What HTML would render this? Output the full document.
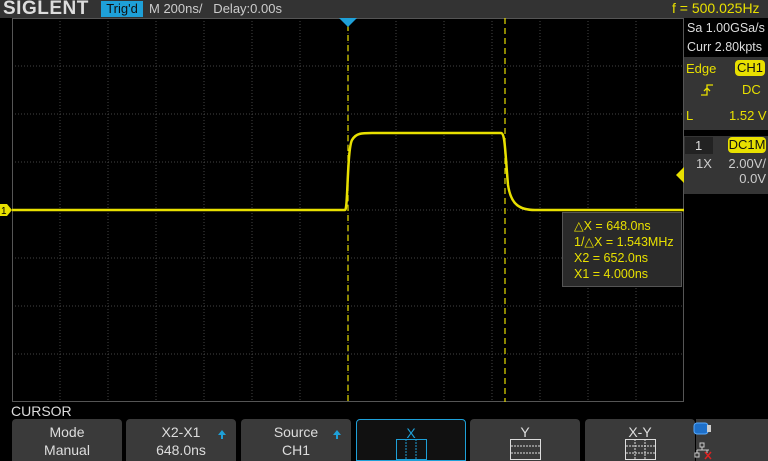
<!DOCTYPE html>
<html><head><style>
body{margin:0;width:768px;height:461px;background:#000;position:relative;overflow:hidden;font-family:"Liberation Sans",sans-serif}
.a{position:absolute}
.btn{position:absolute;top:419px;height:42px;width:110px;background:#3a3a3a;border-radius:4px 4px 0 0;color:#ddd;font-size:14px;text-align:center;line-height:18px;box-sizing:border-box;padding-top:4px}
.y{color:#e8e000}
</style></head><body>
<div class="a" style="left:0;top:0;width:768px;height:18px;background:#333"></div>
<div class="a" style="left:3px;top:-2px;font-size:19px;font-weight:bold;color:#ddd;letter-spacing:0.5px">SIGLENT</div>
<div class="a" style="left:101px;top:1px;width:42px;height:16px;background:#1ea0d8;color:#111;font-size:13px;line-height:16px;text-align:center">Trig'd</div>
<div class="a" style="left:149px;top:1px;font-size:13px;color:#ccc;line-height:16px">M 200ns/&nbsp;&nbsp; Delay:0.00s</div>
<div class="a y" style="left:672px;top:0px;font-size:14px;line-height:17px">f = 500.025Hz</div>
<div class="a" style="left:687px;top:19px;font-size:12.5px;color:#ddd;line-height:19px">Sa 1.00GSa/s<br>Curr 2.80kpts</div>
<div class="a" style="left:684px;top:57px;width:84px;height:73px;background:#353535"></div>
<div class="a y" style="left:686px;top:61px;font-size:13px">Edge</div>
<div class="a" style="left:735px;top:60px;width:30px;height:16px;background:#e8e000;border-radius:4px;color:#111;font-size:13px;text-align:center;line-height:16px">CH1</div>
<svg class="a" style="left:700px;top:83px" width="14" height="14"><path d="M1 12H7V2H13M4 8L7 5L10 8" stroke="#e8e000" fill="none" stroke-width="1.3"/></svg>
<div class="a y" style="left:742px;top:82px;font-size:13px">DC</div>
<div class="a y" style="left:686px;top:108px;font-size:13px">L</div>
<div class="a y" style="left:729px;top:108px;font-size:13px">1.52 V</div>
<div class="a" style="left:684px;top:136px;width:84px;height:58px;background:#353535"></div>
<div class="a" style="left:685px;top:137px;width:28px;height:17px;background:#222;color:#ddd;font-size:13px;line-height:17px;padding-left:10px;box-sizing:border-box">1</div>
<div class="a" style="left:728px;top:137px;width:38px;height:16px;background:#e8e000;border-radius:4px;color:#111;font-size:13px;text-align:center;line-height:16px">DC1M</div>
<div class="a" style="left:696px;top:156px;font-size:13px;color:#ccc">1X</div>
<div class="a" style="left:728px;top:156px;font-size:13px;color:#ccc;text-align:right;width:38px;line-height:15px">2.00V/<br>0.0V</div>
<svg class="a" style="left:0;top:0" width="768" height="420">
<g stroke="#444" stroke-dasharray="1 2" stroke-width="1">
<path d="M60 18V402M108 18V402M156 18V402M204 18V402M252 18V402M300 18V402M348 18V402M396 18V402M444 18V402M492 18V402M540 18V402M588 18V402M636 18V402"/>
<path d="M12 66H684M12 114H684M12 162H684M12 210H684M12 258H684M12 306H684M12 354H684"/>
</g>
<rect x="12.5" y="18.5" width="671" height="383" fill="none" stroke="#555"/>
<path d="M12 210H345C348 210 347 150 352 140C356 133 362 133 372 133H501C505 133 505 150 508 185C511 205 520 210 535 210H684" stroke="#e8e000" stroke-width="2.5" fill="none"/>
<path d="M348 25V402M505 18V402" stroke="#e8e000" stroke-width="1.2" stroke-dasharray="6 4"/>
<path d="M339 18H357L348 27Z" fill="#1ea0d8"/>
<path d="M0 204H7L12 210L7 216H0Z" fill="#e8e000"/>
<text x="1" y="214" font-size="10" fill="#000" font-family="Liberation Sans">1</text>
<path d="M684 167V183L676 175Z" fill="#e8e000"/>
<rect x="562.5" y="212.5" width="119" height="74" fill="#2a2a2a" stroke="#555"/>
<g fill="#e8e000" font-size="12.5" font-family="Liberation Sans">
<text x="574" y="230">△X = 648.0ns</text>
<text x="574" y="246">1/△X = 1.543MHz</text>
<text x="574" y="262">X2 = 652.0ns</text>
<text x="574" y="278">X1 = 4.000ns</text>
</g>
</svg>
<div class="a" style="left:11px;top:403px;font-size:14px;color:#ddd">CURSOR</div>
<div class="btn" style="left:12px">Mode<br>Manual</div>
<div class="btn" style="left:126px">X2-X1<br>648.0ns</div>
<div class="btn" style="left:241px">Source<br>CH1</div>
<div class="btn" style="left:470px">Y</div>
<div class="btn" style="left:585px">X-Y</div>
<div class="btn" style="left:356px;background:#111;border:1px solid #1ea0d8;color:#1ea0d8">X</div>
<svg class="a" style="left:0;top:419px" width="768" height="42">
<path d="M222 11L226 16H223V20H221V16H218Z" fill="#1ea0d8"/>
<path d="M337 11L341 16H338V20H336V16H333Z" fill="#1ea0d8"/>
<rect x="396.5" y="20.5" width="30" height="20" fill="none" stroke="#1ea0d8"/>
<path d="M406 20V41M416 20V41" stroke="#1ea0d8" stroke-dasharray="2 1"/>
<rect x="510.5" y="20.5" width="30" height="20" fill="none" stroke="#ddd"/>
<path d="M511 27H540M511 34H540" stroke="#ddd" stroke-dasharray="2 1"/>
<rect x="625.5" y="20.5" width="30" height="20" fill="none" stroke="#ddd"/>
<path d="M626 27H655M626 34H655M635 20V41M645 20V41" stroke="#ddd" stroke-dasharray="2 1"/>
<rect x="696" y="0" width="72" height="42" fill="#3a3a3a"/>
<rect x="694" y="4" width="14" height="11" rx="3" fill="#1e6fc8" stroke="#5af" />
<rect x="707" y="6" width="4" height="7" fill="#ccc"/>
<path d="M700 24H704V28H700ZM702 28V31M697 31H709M697 31V34M707 31V34M695 34H699V38H695Z" stroke="#ccc" fill="none"/>
<path d="M705 33L711 40M711 33L705 40" stroke="#d22" stroke-width="1.5"/>
</svg>
</body></html>
